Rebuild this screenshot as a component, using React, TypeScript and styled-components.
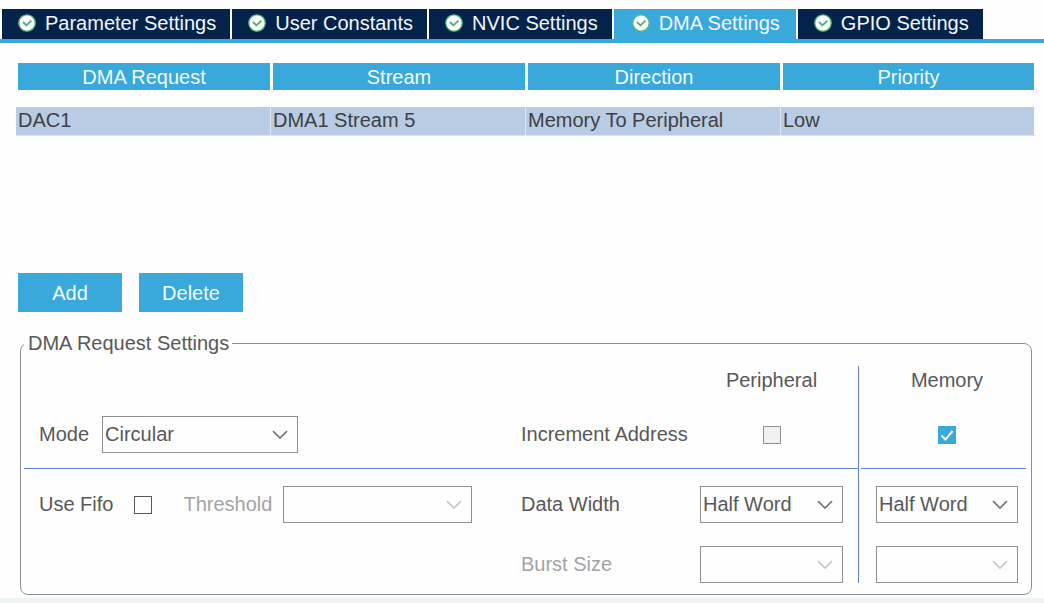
import React, { useState } from "react";
import styled, { createGlobalStyle } from "styled-components";

const blue = "#39a9dc";
const navy = "#03234b";
const line = "#5f83c2";
const frame = "#8e9193";

const GlobalStyle = createGlobalStyle`
  *, *::before, *::after { box-sizing: border-box; }
  body {
    margin: 0;
    background: #fefefe;
    color: #58585a;
    font: 20px/24px "Liberation Sans", Arial, sans-serif;
  }
  button, select, input { font: inherit; color: inherit; margin: 0; }
`;

const Page = styled.main`
  display: flex;
  flex-direction: column;
  padding-top: 9px;
`;

const TabBar = styled.div`
  display: flex;
  gap: 2px;
  padding-left: 2px;
  border-bottom: 4px solid ${blue};
`;

const Tab = styled.button<{ $active: boolean }>`
  display: flex;
  align-items: center;
  gap: 9px;
  height: 30px;
  padding: ${(p) => (p.$active ? "0 16px 2px 18px" : "0 14px 2px 16px")};
  border: 0;
  background: ${(p) => (p.$active ? blue : navy)};
  color: #f2f7fa;
  white-space: nowrap;
`;

const TableArea = styled.section`
  min-height: 210px;
  margin: 20px 8px 0 16px;
`;

const Table = styled.table`
  width: 100%;
  table-layout: fixed;
  border-collapse: separate;
  border-spacing: 0;
`;

const HeadCell = styled.th`
  height: 44px;
  padding: 1px 0 0;
  border: solid #fefefe;
  border-width: 0 1px 17px 2px;
  background: ${blue};
  color: #f2f9fd;
  font-weight: normal;
  &:last-child { border-right-width: 2px; }
`;

const Cell = styled.td`
  height: 29px;
  padding: 0 2px 2px;
  border-right: 1px solid #dfe8f2;
  border-bottom: 1px solid #dfe3e8;
  background: #b8cce4;
  color: #404042;
  white-space: nowrap;
  &:last-child { border-right: 2px solid #fefefe; }
`;

const Actions = styled.div`
  display: flex;
  gap: 17px;
  padding-left: 18px;
`;

const ActionButton = styled.button`
  width: 104px;
  height: 39px;
  padding: 0;
  border: 0;
  background: ${blue};
  color: #f2f9fd;
`;

const Group = styled.fieldset`
  display: flex;
  min-width: 0;
  margin: 19px 12px 3px 20px;
  padding: 11px 5px 11px 3px;
  border: 1px solid ${frame};
  border-radius: 8px;
`;

const Legend = styled.legend`
  padding: 0 3px 0 4px;
`;

const MainPane = styled.div`
  flex: 1;
  border-right: 1px solid ${line};
`;

const MemoryPane = styled.div`
  width: 165px;
  margin-left: 2px;
`;

const Upper = styled.div`
  display: grid;
  grid-template-rows: 28px 37px;
  row-gap: 22px;
  align-items: center;
  padding-bottom: 15px;
  border-bottom: 1px solid ${line};
`;

const Lower = styled.div`
  display: grid;
  grid-template-rows: 37px 37px;
  row-gap: 23px;
  align-items: center;
  padding-top: 17px;
`;

const MainUpper = styled(Upper)`
  grid-template-columns: 1fr 179px 143px;
  padding-left: 15px;
  padding-right: 15px;
`;

const MainLower = styled(Lower)`
  grid-template-columns: 1fr 179px 143px;
  padding-left: 15px;
  padding-right: 15px;
`;

const MemoryUpper = styled(Upper)`
  padding-left: 15px;
  padding-right: 8px;
`;

const MemoryLower = styled(Lower)`
  padding-left: 15px;
  padding-right: 8px;
`;

const ColumnTitle = styled.span`
  grid-column: -2;
  text-align: center;
`;

const FieldRow = styled.div<{ $gap: number }>`
  display: flex;
  align-items: center;
  gap: ${(p) => p.$gap}px;
  grid-column: 1;
`;

const Label = styled.label<{ $dim?: boolean }>`
  padding-bottom: 2px;
  color: ${(p) => (p.$dim ? "#a3a3a5" : "inherit")};
  white-space: nowrap;
`;

const Caption = styled(Label)`
  grid-column: -3;
`;

const FifoPart = styled.div`
  display: flex;
  align-items: center;
  gap: 21px;
`;

const ThresholdPart = styled.div`
  display: flex;
  align-items: center;
  gap: 11px;
`;

const Check = styled.span`
  display: grid;
  width: 18px;
  height: 18px;
  justify-self: center;
  > * { grid-area: 1 / 1; }
  svg { pointer-events: none; }
`;

const CheckInput = styled.input`
  appearance: none;
  width: 18px;
  height: 18px;
  border: 1px solid #58585a;
  background: #fefefe;
  &:checked { border-color: ${blue}; background: ${blue}; }
  &:disabled { border-color: ${frame}; background: #eff1f3; }
`;

const SelectBox = styled.div<{ $width?: number }>`
  display: grid;
  align-items: center;
  width: ${(p) => (p.$width ? `${p.$width}px` : "100%")};
  > * { grid-area: 1 / 1; }
  svg { justify-self: end; margin-right: 10px; pointer-events: none; }
`;

const SelectInput = styled.select`
  appearance: none;
  width: 100%;
  height: 37px;
  padding: 0 26px 2px 2px;
  border: 1px solid ${frame};
  border-radius: 0;
  background: #fefefe;
  &:disabled { opacity: 1; }
`;

const BottomStrip = styled.div`
  height: 5px;
  background: #f0f3f4;
`;

const StatusIcon = () => (
  <svg width="18" height="18" viewBox="0 0 18 18" fill="none" aria-hidden="true">
    <circle cx="9" cy="9" r="8.2" fill="#fbfefb" stroke="#5fb87b" strokeWidth="1.3" />
    <path d="M5 8 8.4 11.4 13.4 6.6" stroke="#62ad7d" strokeWidth="2" />
  </svg>
);

interface SelectProps {
  id: string;
  options: string[];
  width?: number;
  disabled?: boolean;
  label?: string;
}

const Select = ({ id, options, width, disabled, label }: SelectProps) => (
  <SelectBox $width={width}>
    <SelectInput id={id} disabled={disabled} aria-label={label}>
      {options.map((o) => (
        <option key={o}>{o}</option>
      ))}
    </SelectInput>
    <svg width="16" height="10" viewBox="0 0 16 10" fill="none" aria-hidden="true">
      <path d="M1 1.2 8 8 15 1.2" stroke={disabled ? "#c6c6c8" : "#77777a"} strokeWidth="1.7" />
    </svg>
  </SelectBox>
);

interface CheckBoxProps {
  id: string;
  initial?: boolean;
  disabled?: boolean;
  label?: string;
}

const CheckBox = ({ id, initial = false, disabled, label }: CheckBoxProps) => {
  const [on, setOn] = useState(initial);
  return (
    <Check>
      <CheckInput
        type="checkbox"
        id={id}
        checked={on}
        disabled={disabled}
        aria-label={label}
        onChange={(e) => setOn(e.target.checked)}
      />
      {on && (
        <svg width="18" height="18" viewBox="0 0 18 18" fill="none" aria-hidden="true">
          <path d="M3.5 9.5 7.4 13.6 14.6 5" stroke="#fff" strokeWidth="2" />
        </svg>
      )}
    </Check>
  );
};

const tabs = ["Parameter Settings", "User Constants", "NVIC Settings", "DMA Settings", "GPIO Settings"];
const columns = ["DMA Request", "Stream", "Direction", "Priority"];
const request = ["DAC1", "DMA1 Stream 5", "Memory To Peripheral", "Low"];
const widths = ["Half Word", "Byte", "Word"];

export default function App() {
  const [active, setActive] = useState("DMA Settings");
  return (
    <Page>
      <GlobalStyle />
      <TabBar role="tablist">
        {tabs.map((t) => (
          <Tab key={t} role="tab" aria-selected={t === active} $active={t === active} onClick={() => setActive(t)}>
            <StatusIcon />
            {t}
          </Tab>
        ))}
      </TabBar>

      <TableArea>
        <Table>
          <thead>
            <tr>
              {columns.map((c) => (
                <HeadCell key={c} scope="col">{c}</HeadCell>
              ))}
            </tr>
          </thead>
          <tbody>
            <tr>
              {request.map((v) => (
                <Cell key={v}>{v}</Cell>
              ))}
            </tr>
          </tbody>
        </Table>
      </TableArea>

      <Actions>
        <ActionButton type="button">Add</ActionButton>
        <ActionButton type="button">Delete</ActionButton>
      </Actions>

      <Group>
        <Legend>DMA Request Settings</Legend>
        <MainPane>
          <MainUpper>
            <ColumnTitle>Peripheral</ColumnTitle>
            <FieldRow $gap={13}>
              <Label htmlFor="mode">Mode</Label>
              <Select id="mode" options={["Circular", "Normal"]} width={196} />
            </FieldRow>
            <Caption htmlFor="inc-peripheral">Increment Address</Caption>
            <CheckBox id="inc-peripheral" disabled />
          </MainUpper>
          <MainLower>
            <FieldRow $gap={31}>
              <FifoPart>
                <Label htmlFor="fifo">Use Fifo</Label>
                <CheckBox id="fifo" />
              </FifoPart>
              <ThresholdPart>
                <Label htmlFor="threshold" $dim>Threshold</Label>
                <Select id="threshold" options={[]} width={189} disabled />
              </ThresholdPart>
            </FieldRow>
            <Caption htmlFor="width-peripheral">Data Width</Caption>
            <Select id="width-peripheral" options={widths} />
            <Caption htmlFor="burst-peripheral" $dim>Burst Size</Caption>
            <Select id="burst-peripheral" options={[]} disabled />
          </MainLower>
        </MainPane>
        <MemoryPane>
          <MemoryUpper>
            <ColumnTitle>Memory</ColumnTitle>
            <CheckBox id="inc-memory" initial label="Increment Address, Memory" />
          </MemoryUpper>
          <MemoryLower>
            <Select id="width-memory" options={widths} label="Data Width, Memory" />
            <Select id="burst-memory" options={[]} disabled label="Burst Size, Memory" />
          </MemoryLower>
        </MemoryPane>
      </Group>
      <BottomStrip />
    </Page>
  );
}
